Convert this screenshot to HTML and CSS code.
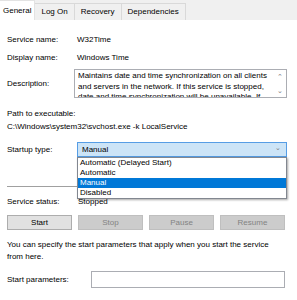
FILE: index.html
```
<!DOCTYPE html>
<html lang="en">
<head>
    <meta charset="UTF-8">
    <title>Windows Time Properties</title>
    <link rel="stylesheet" href="styles.css">
</head>
<body>
    <div class="tabs">
        <span class="tab active">General</span>
        <span class="tab">Log On</span>
        <span class="tab">Recovery</span>
        <span class="tab">Dependencies</span>
    </div>
    <div class="page">
        <div class="row name-row">
            <span class="label">Service name:</span>
            <span class="value">W32Time</span>
        </div>
        <div class="row display-row">
            <span class="label">Display name:</span>
            <span class="value">Windows Time</span>
        </div>
        <div class="row desc-row">
            <span class="label desc-label">Description:</span>
            <div class="desc-box">
                <div class="desc-text">Maintains date and time synchronization on all clients and servers in the network. If this service is stopped, date and time synchronization will be unavailable. If</div>
                <div class="scroll">
                    <span>&#8963;</span>
                    <span>&#8964;</span>
                </div>
            </div>
        </div>
        <div class="path-label">Path to executable:</div>
        <div class="path">C:\Windows\system32\svchost.exe -k LocalService</div>
        <div class="row startup-row">
            <span class="label">Startup type:</span>
            <div class="combo">
                <span>Manual</span>
                <span class="chevron">&#8964;</span>
            </div>
            <ul class="options">
                <li>Automatic (Delayed Start)</li>
                <li>Automatic</li>
                <li class="selected">Manual</li>
                <li>Disabled</li>
            </ul>
        </div>
        <div class="separator"></div>
        <div class="row status-row">
            <span class="label">Service status:</span>
            <span class="status">Stopped</span>
        </div>
        <div class="buttons">
            <button>Start</button>
            <button disabled>Stop</button>
            <button disabled>Pause</button>
            <button disabled>Resume</button>
        </div>
        <p class="hint">You can specify the start parameters that apply when you start the service from here.</p>
        <div class="row params-row">
            <span class="label params-label">Start parameters:</span>
            <input class="params" type="text">
        </div>
    </div>
</body>
</html>
```

FILE: styles.css
```
*{
    margin: 0;
    padding: 0;
    box-sizing: border-box;
    font-family: 'Liberation Sans', Arial, sans-serif;
}
body{
    width: 297px;
    height: 300px;
    background: #fff;
    color: #000;
    font-size: 8px;
    overflow: hidden;
}
ul,li{
    list-style: none;
}

.tabs{
    height: 20px;
    background: #f0f0f0;
    display: flex;
    align-items: flex-end;
}
.tabs .tab{
    height: 17px;
    line-height: 16px;
    padding: 0 6px;
    border: 1px solid #d9d9d9;
    border-left: 0;
    border-bottom: 0;
    background: #f0f0f0;
}
.tabs .tab.active{
    height: 20px;
    line-height: 20px;
    background: #fff;
    padding: 0 3px;
    border-color: #e3e3e3;
}

.page{
    padding: 0 10px 0 7px;
}
.row{
    display: flex;
    align-items: center;
}
.row .label{
    width: 70px;
    flex: none;
}
.name-row{
    height: 12px;
    margin-top: 13px;
}
.display-row{
    height: 12px;
    margin-top: 6px;
}

.desc-row{
    margin-top: 6px;
    align-items: flex-start;
}
.desc-row .desc-label{
    margin-top: 10px;
    width: 67px;
}
.desc-box{
    flex: 1;
    height: 29px;
    border: 1px solid #abadb3;
    display: flex;
    overflow: hidden;
}
.desc-text{
    flex: 1;
    padding: 1px 0 0 3px;
    line-height: 10.5px;
}
.desc-box .scroll{
    width: 12px;
    display: flex;
    flex-direction: column;
    justify-content: space-around;
    align-items: center;
    color: #7a7a7a;
    font-size: 7px;
    line-height: 9px;
}

.path-label{
    margin-top: 10px;
    line-height: 12px;
}
.path{
    margin-top: 1px;
    line-height: 12px;
}

.startup-row{
    margin-top: 9px;
    position: relative;
}
.combo{
    flex: 1;
    height: 15px;
    background: #cce4f7;
    border: 1px solid #569de5;
    display: flex;
    justify-content: space-between;
    align-items: center;
    padding: 0 5px 0 4px;
}
.combo .chevron{
    color: #7a7a7a;
    font-size: 7px;
    margin-top: -4px;
}
.options{
    position: absolute;
    top: 15px;
    left: 70px;
    right: 0;
    background: #fff;
    border: 1px solid #828790;
    box-shadow: 1px 1px 2px rgba(0, 0, 0, 0.35);
    z-index: 2;
}
.options li{
    height: 10px;
    line-height: 10px;
    padding-left: 2px;
}
.options li.selected{
    background: #0078d7;
    color: #fff;
}

.separator{
    margin-top: 29px;
    height: 1px;
    background: #a0a0a0;
}
.status-row{
    height: 12px;
    margin-top: 8px;
}
.status-row .status{
    margin-left: 1px;
}

.buttons{
    margin-top: 8px;
    display: flex;
    gap: 6px;
}
.buttons button{
    width: 65px;
    height: 15px;
    font-size: 8px;
    background: #e1e1e1;
    border: 1px solid #adadad;
    color: #000;
}
.buttons button:disabled{
    background: #cccccc;
    border-color: #bfbfbf;
    color: #838383;
}

.hint{
    margin-top: 9px;
    line-height: 12px;
    padding-right: 8px;
}

.params-row{
    margin-top: 8px;
}
.params-row .params-label{
    width: 84px;
}
.params{
    flex: 1;
    height: 17px;
    border: 1px solid #abadb3;
    margin-right: 2px;
}
```
